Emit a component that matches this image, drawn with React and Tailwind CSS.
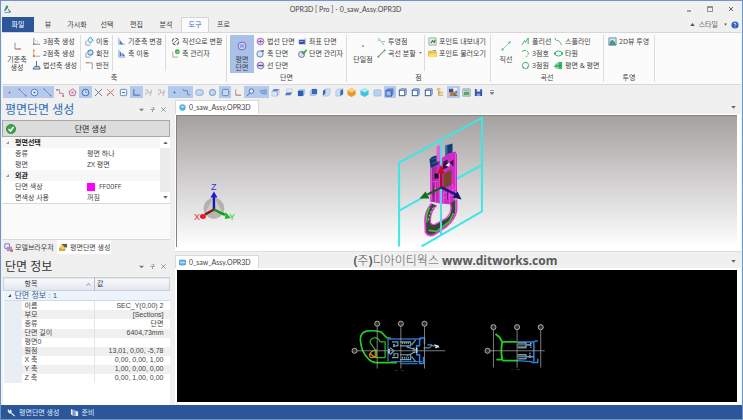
import React from "react";

const BLUE = "#4a72c0";
const GREEN = "#2fae5f";

const glyphs = {
  axis: <><path d="M3 1.500V8H9" fill="none" stroke="#8d93a0" /><path d="M3 8H9" stroke="#d98576" /></>,
  axisPoints: <><path d="M2 1V8H9" fill="none" stroke="#7d8798" /><path d="M4 4L7 6" stroke="#6aa9d8" strokeDasharray="1 1" /><circle cx="2" cy="8" r="1" fill="#d9654f" /></>,
  axisTwo: <><path d="M2 1V8H9" fill="none" stroke="#a9a0a0" /><circle cx="2" cy="8" r="1.200" fill="#e07a3e" /><circle cx="2" cy="1.500" r="1" fill="#e07a3e" /></>,
  axisNormal: <path d="M5 0V7M1 9L3 6H8L9 9Z" fill="#b9cde8" stroke="#486a9e" />,
  move: <><path d="M1 4V9H6" fill="none" stroke="#999" /><path d="M6 0L9 3.500L6 7L3 3.500Z" fill="#d9f1fb" stroke="#2c93c9" /></>,
  rotate: <><path d="M1 4V9H6" fill="none" stroke="#999" /><circle cx="6" cy="4" r="3" fill="#9fd2ee" stroke="#2579ae" /><path d="M4 5L8 3" stroke="#fff" /></>,
  flip: <><path d="M1 2H8V9" fill="none" stroke="#9a8a88" /><path d="M1 2H4" stroke="#e0806a" /></>,
  axisChange: <><path d="M2 1V8H9" fill="none" stroke="#7fa8dc" /><path d="M3 8V3L7 8Z" fill="#4f80c4" /></>,
  axisMove: <><path d="M2 1V9H9" fill="none" stroke="#7fa8dc" /><path d="M3 8V2L5 5V8M6 8V4L9 8Z" fill="#3e6fb6" /></>,
  convert: <><circle cx="5" cy="5" r="3.600" fill="none" stroke="#5e6470" strokeWidth="1.300" strokeDasharray="4 1.500" /><path d="M3.500 6.500L6.500 3.500" stroke="#555" /></>,
  axisManager: <><path d="M2 3V9H8" fill="none" stroke="#bb9a90" /><circle cx="7" cy="3" r="2.700" fill="#37b34a" /><path d="M5.800 3L6.800 4L8.300 2" fill="none" stroke="#e5ffe8" strokeWidth=".8" /></>,
  plane: <><circle cx="5" cy="5" r="4" fill="#d3cdf4" stroke="#7668c4" /><path d="M3 3.500H7V6.500H3Z" fill="#8f9ce8" /></>,
  planeNormal: <><circle cx="5" cy="5" r="3.800" fill="#efc9e4" stroke="#9c6fc0" /><path d="M2 5H8M5 3V7" stroke="#7b65c0" /></>,
  planeAxis: <><circle cx="4.500" cy="5.500" r="3.500" fill="#dbeaf8" stroke="#5b78ac" /><path d="M5 2L9 1L8 4Z" fill="#44639e" /></>,
  planeLine: <><circle cx="5" cy="5" r="3.800" fill="#ead9f4" stroke="#7c6cae" /><path d="M2 5H8" stroke="#5945ad" strokeWidth="1.500" /></>,
  coord: <><path d="M1 3H8V8H1Z" fill="#3851a5" /><path d="M0 5H6M8 1V9" stroke="#9aaede" /></>,
  planeManager: <><circle cx="4" cy="6" r="3.400" fill="#e4dcf3" stroke="#7769a0" /><path d="M4.500 3L6 5L9.500 1" fill="none" stroke="#2bb046" strokeWidth="2" /></>,
  point: <circle cx="5" cy="5" r="1" fill="#65aa83" />,
  project: <path d="M1 1L8 9M1 5L3 3M6 5H9" fill="none" stroke="#76b494" strokeWidth="1" />,
  split: <><path d="M1 9L9 1" stroke="#7b9a86" strokeWidth="1.200" /><circle cx="1.500" cy="8.500" r="1" fill={GREEN} /><circle cx="8.500" cy="1.500" r="1" fill={GREEN} /></>,
  exporter: <><path d="M1 1H9V9H1Z" fill="#e8efe9" stroke="#9baaa2" /><path d="M3 7L5 4L7 6L8 3" fill="none" stroke="#278f48" strokeWidth="1.300" /></>,
  folder: <><path d="M0 2H4L5 3H10V9H0Z" fill="#eebb43" /><path d="M0 9L2 5H10L9 9Z" fill="#ffdb73" /><path d="M5 2H9" stroke="#3d8148" /></>,
  line: <><path d="M1 9L9 1" stroke="#8fcf9f" strokeWidth="1" /><circle cx="1.500" cy="8.500" r="1" fill={GREEN} /><circle cx="8.500" cy="1.500" r="1" fill={GREEN} /></>,
  polyline: <path d="M1 9L4 4L5 6L8 1V8" fill="none" stroke={GREEN} />,
  arc: <path d="M1 3C4 0 9 2 8 6L6 9" fill="none" stroke={GREEN} strokeDasharray="5 1" />,
  circle3: <><circle cx="5" cy="5" r="3.500" fill="none" stroke={GREEN} /><path d="M5 1V2M2 7L3 7M8 7L7 7" stroke={GREEN} strokeWidth="2" /></>,
  spline: <path d="M1 1C2 6 4 2 6 5S8 7 8 9" fill="none" stroke={GREEN} />,
  ellipse: <><ellipse cx="5" cy="5" rx="4" ry="2.800" fill="none" stroke={GREEN} /><path d="M0 5H2M8 5H10" stroke={GREEN} strokeWidth="2" /></>,
  planes: <><path d="M1 4L5 1V8L2 9Z" fill="#73cf91" /><path d="M5 1H9V9H5Z" fill="#36b766" /><path d="M0 6L8 5" stroke="#1c8c46" /></>,
  view2d: <><path d="M1 1H9V9H1Z" fill="#d4e8f4" stroke="#6487a9" /><path d="M2 5L5 3L8 6V8H2Z" fill="#4b9a75" /><path d="M1 8.500H9" stroke="#2f7d8b" /></>,
  redDot: <circle cx="5" cy="5" r="1" fill="#c3547c" />,
  blueDot: <circle cx="5" cy="5" r="1" fill="#335fae" />,
  seg: <><path d="M1 1L9 9" stroke="#7489b5" /><circle cx="1.500" cy="1.500" r=".9" fill="#b95b84" /><circle cx="8.500" cy="8.500" r=".9" fill="#b95b84" /></>,
  ring: <><circle cx="5" cy="5" r="3.700" fill="#e5efff" stroke={BLUE} /><path d="M4 4H6V6H4Z" fill="#4165a7" /></>,
  ringArrow: <><circle cx="5" cy="5" r="3.700" fill="#c5daf8" stroke="#4a6cac" strokeWidth="1.100" /><path d="M5 2V5H7" fill="none" stroke="#7f9ac8" /></>,
  steps: <path d="M1 1L2 3H6V7L9 8" fill="none" stroke="#687fa8" />,
  redSteps: <><path d="M1 2H4V6H8V9" fill="none" stroke="#9d8298" /><path d="M0 2H2M7 9H9" stroke="#d84d63" strokeWidth="1.500" /></>,
  hexRed: <><path d="M5 1L9 4L7.500 8.500H2.500L1 4Z" fill="#ead7e6" stroke="#a96d91" /><path d="M4 5H6" stroke="#cc3e57" /></>,
  cross: <path d="M1 1L9 9M9 1L1 9" stroke="#667085" />,
  crossRed: <><path d="M1 1L9 9M9 1L1 9" stroke="#a08c98" /><path d="M1 8L5 5L9 9" fill="none" stroke="#e05a5a" /></>,
  frame: <><rect x="1.500" y="1.500" width="7" height="7" rx="1" fill="#e9f2ff" stroke="#5b7db9" /><path d="M3.500 5H6.500" stroke="#365998" /></>,
  frameSoft: <rect x="1.500" y="1.500" width="7" height="7" rx="1.500" fill="#c3d9f8" stroke="#5b7db9" />,
  cornerBlue: <path d="M2 1V8H9" fill="none" stroke="#5d7eb1" strokeWidth="1.300" />,
  gray: <path d="M1 2H4V5H7V9M2 8V5M8 2V6" fill="none" stroke="#c4c4c4" strokeWidth="1.500" />,
  box: <rect x="1" y="2" width="8" height="6" rx="2" fill="#c8dcf6" stroke="#7f9dcb" />,
  circ: <circle cx="5" cy="5" r="3.500" fill="#bdd5f3" stroke="#7591bf" />,
  search: <><circle cx="6" cy="3.500" r="2.500" fill="#dceaff" stroke="#48689f" /><path d="M4 5.500L1 9" stroke="#48689f" /></>,
  flag: <path d="M1 3L8 2V7L3 6Z" fill="#86aee2" stroke="#5f82b6" strokeWidth=".6" />,
  cubeTop: <><path d="M1 4L3 1H9L7 4Z" fill="#5d87cb" /><path d="M1 4H7V9H1ZM7 4L9 1V6L7 9Z" fill="#dce9fb" stroke="#8aa6d2" strokeWidth=".6" /></>,
  cubeBottom: <><path d="M3 1H9V6H3Z" fill="#e3eefc" stroke="#a9c0e2" strokeWidth=".6" /><path d="M1 8L3 5H9L7 8Z" fill="#4a78c3" /></>,
  cubeFront: <><path d="M1 4L3 1H9V6L7 9Z" fill="#adc7ee" /><rect x="1" y="3" width="6" height="6" fill="#2c5db4" /></>,
  cubeBack: <><rect x="3" y="1" width="6" height="6" fill="#3968b9" /><path d="M1 3V9H7L9 7H3V1Z" fill="#a9c4ec" /></>,
  cubeLeft: <><path d="M1 3L4 1V6L1 9Z" fill="#3766b8" /><path d="M4 1H9V6L7 9H1L4 6Z" fill="#cbdcf5" stroke="#89a6d5" strokeWidth=".5" /></>,
  cubeRight: <><path d="M1 3L3 1H9L6 3V9H1Z" fill="#cbdcf5" stroke="#89a6d5" strokeWidth=".5" /><path d="M6 3L9 1V7L6 9Z" fill="#3766b8" /></>,
  cubeOrange: <><path d="M5 0L9.500 2.500V7.500L5 10L.5 7.500V2.500Z" fill="#e79a28" /><path d="M5 0L9.500 2.500L5 5L.5 2.500Z" fill="#ffd27a" /></>,
  cubeCyan: <><path d="M5 0L9.500 2.500V7.500L5 10L.5 7.500V2.500Z" fill="#42c4dc" /><path d="M5 0L9.500 2.500L5 5L.5 2.500Z" fill="#a8eef6" /></>,
  slab: <rect x="1" y="2" width="8" height="7" rx="1" fill="#b9d1f1" stroke="#8ba9d6" strokeWidth=".6" />,
  cubeShade: <><rect x="1" y="3" width="6" height="6" fill="#9dbcf0" stroke="#2f55a0" /><path d="M1 3L3 1H9V7L7 9V3Z" fill="#6e93d4" stroke="#2f55a0" strokeWidth=".6" /></>,
  cubeWire: <><rect x="1.500" y="2.500" width="6" height="6" fill="#fff" stroke="#4469b4" strokeWidth="1.200" /><path d="M1.500 2.500L3 1H9V7L7.500 8.500" fill="none" stroke="#4469b4" /></>,
  tree: <><path d="M3 1V8H6M3 5H6" fill="none" stroke="#a48b52" /><path d="M1 0H5V3H1ZM5 4H8V6H5ZM5 7H8V9H5Z" fill="#e6c372" /></>,
  palette: <><path d="M0 1H5V5H0Z" fill="#514887" /><path d="M5 0H9V4H5Z" fill="#f1eef8" /><path d="M1 5H5V9H1Z" fill="#e06b36" /><path d="M5 4L10 9H5Z" fill="#438948" /><path d="M7 3H9V6H7Z" fill="#af539f" /></>,
  sheet: <><path d="M1 1H9V9H1Z" fill="#f3f8f4" stroke="#8894a6" /><path d="M2 4H8V8H2Z" fill="#54a866" /><path d="M2 2.500H8" stroke="#6c8fc3" /></>,
  save: <><path d="M1 1H8L9 2V9H1Z" fill="#3450a5" /><path d="M3 1H7V4H3Z" fill="#e3e9fa" /><path d="M3 6H7V9H3Z" fill="#8c9fd5" /></>,
  tick: <><circle cx="5" cy="5" r="4.600" fill="#3aa546" stroke="#247630" strokeWidth=".7" /><path d="M2.500 5L4.500 7L7.500 3" fill="none" stroke="#fff" strokeWidth="1.600" /></>,
  browser: <><path d="M1 1H6V6H1Z" fill="#fff" stroke="#77629d" /><path d="M3 4H9V9H3Z" fill="#ad91d2" /><path d="M7 7H10V10H7Z" fill="#d87545" /></>,
  props: <><path d="M0 5H7V9H0Z" fill="#d9ac38" /><path d="M3 1H9V5H3Z" fill="#5d6150" /><path d="M1 3L4 2L7 6L3 7Z" fill="#f2ce6a" /></>,
  wrench: <path d="M1 1L3 3L4 1.500A3 3 0 0 1 5 5L9 8.500L8 9.500L4.500 6A3 3 0 0 1 1 2Z" fill="#e7eefb" />,
  book: <path d="M1 1L3 2V9L1 7ZM4 2H5V9H4ZM6 3L9 4V9H6Z" fill="#e7eefb" />,
  globe: <><circle cx="5" cy="5" r="4.500" fill="#4fb0de" /><path d="M2 4L5 2L8 4L5 6Z" fill="#a9e0f6" /></>,
  doc: <><rect x=".5" y="1.500" width="9" height="7" rx="1" fill="#6fbbe5" stroke="#3f92c8" /><path d="M2 5H8" stroke="#e6f6ff" /></>,
  help: <><circle cx="5" cy="5" r="4.500" fill="#2d63c0" /><path d="M3.500 3.800C4 2.300 6.600 2.600 6 4.300L5 5.500M5 7V8" fill="none" stroke="#fff" strokeWidth="1.200" /></>,
};

function Icon({ name, className = "size-[9px]" }) {
  return (
    <svg viewBox="0 0 10 10" aria-hidden="true" className={`shrink-0 ${className}`}>
      {glyphs[name]}
    </svg>
  );
}

function Caret({ className = "" }) {
  return (
    <svg viewBox="0 0 6 4" aria-hidden="true" className={`h-[3px] w-[5px] shrink-0 ${className}`}>
      <path d="M0 0H6L3 3.500Z" fill="#666" />
    </svg>
  );
}

function ToolColumn({ items, className }) {
  return (
    <div className={`flex shrink-0 flex-col ${className}`}>
      {items.map(([icon, label, menu]) => (
        <button key={label} className="flex h-[12px] items-center gap-[2px] whitespace-nowrap">
          <Icon name={icon} />
          <span>{label}</span>
          {menu && <svg viewBox="0 0 4 3" className="ml-px h-[2px] w-[3px]"><path d="M0 0H4L2 2.500Z" fill="#666" /></svg>}
        </button>
      ))}
    </div>
  );
}

function BigTool({ icon, lines, className = "" }) {
  return (
    <button className={`flex h-[38px] shrink-0 flex-col items-center pt-[6px] ${className}`}>
      <Icon name={icon} className="mb-[5px] size-[10px]" />
      {lines.map((l) => <span key={l} className="leading-[8px]">{l}</span>)}
    </button>
  );
}

function Group({ label, className, children }) {
  return (
    <section aria-label={label} className={`my-[2px] flex shrink-0 flex-col border-r border-[#dcdcdc] ${className}`}>
      <div className="flex h-[38px]">{children}</div>
      <div className="text-center leading-[9px]">{label}</div>
    </section>
  );
}

const Rule = () => <div className="h-[36px] w-px shrink-0 bg-[#dcdcdc]" />;

const tabs = [
  ["파일", "w-[32px] bg-[#2b579a] text-white"],
  ["뷰", "w-[28px]"],
  ["가시화", "w-[30px]"],
  ["선택", "w-[30px]"],
  ["편집", "w-[29px]"],
  ["분석", "w-[30px]"],
  ["도구", "w-[28px] border border-b-0 border-[#d5d5d5] bg-[#fbfbfb] pb-px text-[#2b6cb8]"],
  ["프로", "w-[29px]"],
];

const quick = [
  ["redDot", 1], ["seg", 1], ["ring", 1], ["seg", 1], ["redSteps"], ["hexRed"], ["ringArrow", 1], ["cross"], ["crossRed"], ["frame"],
  ["cornerBlue", 1], ["gray"], ["gray"], ["blueDot", 1], ["steps", 1], ["box"], ["circ"], ["frameSoft", 1], ["axis"], ["search", 1],
  ["flag", 1], ["cubeTop"], ["cubeBottom"], ["cubeFront"], ["cubeBack"], ["cubeLeft"], ["cubeRight"], ["cubeOrange"], ["cubeCyan"], ["slab"],
  ["cubeShade", 1], ["cubeWire"], ["cubeWire"], ["cubeWire"], ["tree"], ["palette", 1], ["sheet"], ["save"],
];

function Ribbon() {
  return (
    <div className="mx-px flex h-[53px] shrink-0 overflow-hidden border-y border-[#d8d8d8] bg-[#fbfbfb]">
      <Group label="축" className="w-[225px]">
        <BigTool icon="axis" lines={["기준축", "생성"]} className="w-[30px]" />
        <ToolColumn className="w-[48px]" items={[["axisPoints", "3점축 생성"], ["axisTwo", "2점축 생성"], ["axisNormal", "법선축 생성"]]} />
        <Rule />
        <ToolColumn className="w-[31px] pl-[4px]" items={[["move", "이동"], ["rotate", "회전"], ["flip", "반전"]]} />
        <Rule />
        <ToolColumn className="w-[52px] pl-[4px]" items={[["axisChange", "기준축 변경"], ["axisMove", "축 이동"]]} />
        <Rule />
        <ToolColumn className="pl-[5px]" items={[["convert", "직선으로 변환"], ["axisManager", "축 관리자"]]} />
      </Group>
      <Group label="단면" className="w-[120px]">
        <BigTool icon="plane" lines={["평면", "단면"]} className="ml-[3px] w-[24px] bg-[#a9c1e6]" />
        <ToolColumn className="w-[42px] pl-[2px]" items={[["planeNormal", "법선 단면"], ["planeAxis", "축 단면"], ["planeLine", "선 단면"]]} />
        <ToolColumn className="pl-[2px]" items={[["coord", "좌표 단면"], ["planeManager", "단면 관리자"]]} />
      </Group>
      <Group label="점" className="w-[144px]">
        <BigTool icon="point" lines={["단일점"]} className="ml-[3px] w-[26px]" />
        <ToolColumn className="w-[48px] pl-px" items={[["project", "투영점"], ["split", "곡선 분할", true]]} />
        <Rule />
        <ToolColumn className="pl-[3px]" items={[["exporter", "포인트 내보내기"], ["folder", "포인트 불러오기"]]} />
      </Group>
      <Group label="곡선" className="w-[113px]">
        <BigTool icon="line" lines={["직선"]} className="w-[30px]" />
        <ToolColumn className="w-[33px]" items={[["polyline", "폴리선"], ["arc", "3점호"], ["circle3", "3점원"]]} />
        <ToolColumn className="" items={[["spline", "스플라인"], ["ellipse", "타원"], ["planes", "평면 & 평면"]]} />
      </Group>
      <Group label="투영" className="w-[51px]">
        <ToolColumn className="pl-[4px]" items={[["view2d", "2D뷰 투영"]]} />
      </Group>
    </div>
  );
}

function PanelTitle({ children, className }) {
  return (
    <div className="flex h-[21px] shrink-0 items-center justify-between pr-[4px] pl-[3px]">
      <h2 className={`text-[12px] leading-[16px] ${className}`}>{children}</h2>
      <div className="flex items-center gap-[6px]">
        <button aria-label="메뉴"><svg viewBox="0 0 6 6" className="size-[5px]"><path d="M0 2H6L3 5Z" fill="#777" /></svg></button>
        <button aria-label="고정"><svg viewBox="0 0 6 6" className="size-[5px]"><path d="M1.500 0H4.500V3H5.500M.5 3H4.500M3 3V6" fill="none" stroke="#777" strokeWidth=".8" /></svg></button>
        <button aria-label="닫기"><svg viewBox="0 0 6 6" className="size-[5px]"><path d="M.5 .5L5.500 5.500M5.500 .5L.5 5.500" stroke="#777" strokeWidth=".9" /></svg></button>
      </div>
    </div>
  );
}

const options = [
  ["평면선택"],
  ["종류", "평면 하나"],
  ["평면", "ZX 평면"],
  ["외관"],
  ["단면 색상", "FF00FF", true],
  ["면색상 사용", "꺼짐"],
];

const info = [
  ["이름", "SEC_Y(0,00) 2"],
  ["부모", "[Sections]"],
  ["종류", "단면"],
  ["단면 길이", "6404,73mm"],
  ["평면0", ""],
  ["원점", "13,01, 0,00, -5,78"],
  ["X 축", "0,00, 0,00, 1,00"],
  ["Y 축", "1,00, 0,00, 0,00"],
  ["Z 축", "0,00, 1,00, 0,00"],
];

function SidePanel() {
  return (
    <aside className="flex w-[168px] shrink-0 flex-col">
      <PanelTitle className="text-[#2a6cb4]">평면단면 생성</PanelTitle>
      <button className="flex h-[17px] shrink-0 items-center border border-[#a9a9a9] bg-[#dcdcdc] px-[3px] text-[8px] text-[#222]">
        <Icon name="tick" className="size-[10px]" />
        <span className="flex-1 pr-[1px] text-center">단면 생성</span>
      </button>
      <div className="flex shrink-0 bg-white">
        <table className="flex-1 table-fixed border-collapse">
          <tbody>
            {options.map(([k, v, swatch]) =>
              v === undefined ? (
                <tr key={k} className="h-[11px] bg-[#f7f7f7]">
                  <th colSpan={2} scope="rowgroup" className="p-0 text-left leading-[11px] font-bold text-[#222]">
                    <span className="flex items-center"><svg viewBox="0 0 4 4" className="mr-[6px] ml-[4px] size-[3px]"><path d="M4 0V4H0Z" fill="#999" /></svg>{k}</span>
                  </th>
                </tr>
              ) : (
                <tr key={k} className="h-[11px]">
                  <th scope="row" className="w-[85px] p-0 pl-[13px] text-left leading-[11px] font-normal">{k}</th>
                  <td className="p-0 leading-[11px]">
                    <span className="flex items-center gap-[4px]">{swatch && <span className="size-[8px] bg-[#ff00ff]" />}{v}</span>
                  </td>
                </tr>
              )
            )}
          </tbody>
        </table>
        <div className="flex w-[10px] flex-col items-center justify-between bg-[#ececec]">
          <button aria-label="위로" className="grid h-[11px] w-full place-items-center bg-white"><Caret className="rotate-180" /></button>
          <button aria-label="아래로" className="grid h-[11px] w-full place-items-center bg-white"><Caret /></button>
        </div>
      </div>
      <div className="h-[36px] shrink-0 border-t border-[#d9d9d9] bg-[#fafafa]" />
      <div className="flex h-[17px] shrink-0 border-t border-[#d9d9d9]">
        <button className="flex h-[14px] w-[55px] items-center gap-[2px] pl-[2px] whitespace-nowrap"><Icon name="browser" />모델브라우저</button>
        <button className="flex h-[14px] w-[54px] items-center gap-[2px] bg-white pl-[2px] whitespace-nowrap"><Icon name="props" />평면단면 생성</button>
      </div>
      <PanelTitle className="text-[#333]">단면 정보</PanelTitle>
      <div className="ml-px flex-1 bg-white font-['Liberation_Sans','Noto_Sans_CJK_KR',sans-serif] text-[#444]">
        <table className="h-[106px] w-full table-fixed border-collapse leading-[8px]">
          <colgroup>
            <col className="w-[18px]" />
            <col className="w-[73px]" />
            <col />
          </colgroup>
          <thead>
            <tr className="h-[13px] border border-[#ccd2dc] bg-linear-to-b from-[#f8f9fb] to-[#e2e6ed]">
              <th className="p-0" />
              <th scope="col" className="p-0 pl-[3px] font-normal">
                <span className="flex items-center justify-between pr-[3px]">항목
                  <svg viewBox="0 0 6 4" className="h-[3px] w-[5px]"><path d="M.5 3.500L3 .5L5.500 3.500" fill="none" stroke="#777" /></svg>
                </span>
              </th>
              <th scope="col" className="border-l border-[#b7bfcd] p-0 pl-[2px] text-left font-normal">값</th>
            </tr>
          </thead>
          <tbody>
            <tr className="bg-[#edf3fa]">
              <th colSpan={3} scope="rowgroup" className="border-b border-[#cddbea] p-0 text-left text-[8px] font-normal text-[#315f96]">
                <span className="flex items-center"><svg viewBox="0 0 4 4" className="mr-[4px] ml-[4px] size-[3px]"><path d="M4 0V4H0Z" fill="#445" /></svg>단면 정보 : 1</span>
              </th>
            </tr>
            {info.map(([k, v]) => (
              <tr key={k} className="even:bg-white odd:bg-[#f0f0f0]">
                <td className="bg-[#e9edf4] p-0" />
                <th scope="row" className="p-0 pl-[3px] text-left font-normal">{k}</th>
                <td className="border-l border-[#e4e4e4] p-0 pr-[6px] text-right whitespace-nowrap">{v}</td>
              </tr>
            ))}
          </tbody>
        </table>
      </div>
    </aside>
  );
}

function Model() {
  return (
    <svg viewBox="176 115 561 130" role="img" aria-label="3D 모델" className="absolute inset-0 h-full w-full">
      <circle cx="213" cy="207" r="10.500" fill="#8d8989" opacity=".55" />
      <path d="M213 195L222 212L213 208L204 212Z" fill="#d8d6d6" opacity=".7" />
      <path d="M213 208V195" stroke="#1818a8" strokeWidth="2.400" />
      <path d="M209.500 196L213 190L216.500 196Z" fill="#1a1ae0" />
      <path d="M213 208L204 213" stroke="#8b1414" strokeWidth="2.400" />
      <ellipse cx="202" cy="215" rx="3" ry="2.500" fill="#e81c1c" />
      <path d="M213 208L224 213.500" stroke="#119411" strokeWidth="2.400" />
      <path d="M224.500 210.500L230 216.500L224 217.500Z" fill="#17bd2b" />
      <g fontFamily="'Liberation Sans', sans-serif" fontSize="9">
        <text x="210" y="188.500" fill="#3434d8">Z</text>
        <text x="193" y="219" fill="#e03030">X</text>
        <text x="228" y="219" fill="#36c63e">Y</text>
      </g>
      <g fill="none" stroke="#3ee6e6" strokeWidth="2">
        <path d="M398.500 245V161L482 116" />
        <path d="M481.500 115V210L421 245" />
        <path d="M399 209L482 163" />
      </g>
      <path d="M445 144L452 142V158H445Z" fill="#173c74" />
      <path d="M445 144L447 143V157H445Z" fill="#2e6ea7" />
      <path d="M429 158Q432 153 440 154L442 167H430Z" fill="#153766" />
      <path d="M431 158L437 156M431 162L438 160" stroke="#2a66a0" />
      <path d="M436 145L440 143L441 146V160H436Z" fill="#e85fdc" />
      <path d="M442 156L448 152L455 150L456.500 153V193L452 203L440 202L430 200V167L437 163Z" fill="#cf2cc6" />
      <path d="M430 167L436 165V200L430 200Z" fill="#a52a9e" />
      <path d="M443 160L447 158V166L442 168ZM449 161L453 158V165Z" fill="#27153b" />
      <path d="M445 164L449 161V165Z" fill="#fff" />
      <path d="M443 172L451 168V183L443 187Z" fill="#76462c" />
      <path d="M434 172H438V177H434Z" fill="#151228" />
      <path d="M431 166V199M435 181V201M455 152V193M439 167V201M449 186V201M452 182L453 198M443 190V202M432 180H437M432 187H439M444 192L455 187M442 197L455 192" stroke="#f048e6" strokeWidth="1" fill="none" />
      <path d="M433 185V195M447 189V198" stroke="#5a2a5c" strokeWidth="1" />
      <path d="M431 202Q424 211 424.500 219L425 231Q428 236 434 233L446 225Q454 217 455 209V198L450 202Q453 212 446 217L435 223Q429 224 430 218Q430 210 436 204Z" fill="#37453a" />
      <path d="M431 202Q424 211 424.500 219L425 231Q428 236 434 233L446 225Q455 217 456 209V198" fill="none" stroke="#e03ad5" strokeWidth="1.800" />
      <path d="M436 204Q430 210 430 218Q429 224 434 223L445 217Q452 212 450 202" fill="none" stroke="#e04ad6" strokeWidth="1.200" />
      <path d="M429 206Q425 213 426.500 221M428 229L436 230L449 220L453 212" fill="none" stroke="#3fc22c" strokeWidth="1.600" />
      <path d="M433 206Q428 212 428 221" fill="none" stroke="#dbffe0" strokeWidth=".8" strokeDasharray="2 2" />
      <path d="M440.500 138V234" stroke="#53dbe5" strokeWidth="2" />
      <path d="M440.500 187V169" stroke="#a80f24" strokeWidth="2.500" />
      <path d="M437 172L440.500 163L444 172Z" fill="#c11020" />
      <path d="M441 186L427 193" stroke="#145c1a" strokeWidth="2" />
      <path d="M419 197L425 190L429 197Z" fill="#176d1b" />
      <path d="M441 186L455 193" stroke="#151b72" strokeWidth="2.500" />
      <path d="M461 198L452 196L457 190Z" fill="#131763" />
    </svg>
  );
}

const balloons = [[376, 322.5], [400, 322.5], [424, 322.5], [353, 350], [494, 326], [518, 326], [542, 326], [488, 350]];

function Drawing() {
  return (
    <svg viewBox="177 268 560 134" role="img" aria-label="단면 도면" className="absolute inset-0 h-full w-full">
      <g fill="none" strokeLinejoin="round">
        <path d="M390 337H386L380 331Q374 329 365 330Q358 332 359 340Q360 351 366 357Q370 362 376 362H396" stroke="#25cf22" strokeWidth="1.700" />
        <path d="M384 341H379Q377 336 373 337Q368 338 369 342L374 349V357H384Z" stroke="#1fba20" strokeWidth="1.300" />
        <path d="M368 354Q370 350 375 349V356L370 357Q367 356 369 353L374 357" stroke="#e58b22" strokeWidth="1.200" />
        <path d="M387 338V361M387 338H421M390 361H422M400 363L417 363" stroke="#2e6db5" strokeWidth="1.400" />
        <path d="M419 337V345H416V354H419V363H423V356M419 337H424V343" stroke="#2b84e4" strokeWidth="1.500" />
        <path d="M391 341H397V345H392M391 357H397V353H392M399 345H410V341H399M399 354H410V359H399M411 344L415 339M411 356L415 361M389 347L393 350L389 354M406 346L415 349M406 355L415 351" stroke="#6fa0c9" strokeWidth="1.200" />
        <path d="M401 342H409M401 357H409M393 343V347M393 354V358M413 347V353" stroke="#9fb497" strokeWidth="2" strokeDasharray="1 1" />
        <path d="M423 347H429L431 345H437L439 347M427 344H432" stroke="#5d8dac" strokeWidth="1.200" />
        <path d="M388 348V353M416 347V352M434 344L438 345.500L435 347" stroke="#d7e4fb" strokeWidth="1.500" />
        <path d="M496 333L500 336L503 341H517M503 341Q501 350 503 359H497M503 360H519" stroke="#20d021" strokeWidth="1.900" />
        <path d="M517 341H535L537 340H539M518 360L532 361L534 362H539V358M535 341V361" stroke="#2f83dc" strokeWidth="1.500" />
        <path d="M519 342H527V347H519M519 354H527V358H519M528 344H532M528 356H535" stroke="#6b90b0" strokeWidth="1.600" />
        <path d="M518 344H527M518 346H527M518 354H527M518 356H527" stroke="#7d9d93" strokeWidth="1" />
        <path d="M532 342V347M531 352V357" stroke="#9ec7f0" strokeDasharray="1 1" strokeWidth="1.500" />
      </g>
      <g stroke="#a0a0a0" strokeWidth=".8" fill="none">
        <path d="M376 325V368M400 325V368M424 325V368M355 350H445M494 329V367M518 329V367M542 329V367M490 350H546" />
        {balloons.map(([x, y]) => <circle key={`${x}-${y}`} cx={x} cy={y} r="2.600" stroke="#ccc" fill="#333" />)}
      </g>
      <path d="M394 370H397M400 370H403M512 369H514M517 369H521" stroke="#3b3b3b" strokeWidth=".8" />
    </svg>
  );
}

function DocTab({ icon }) {
  return (
    <button className="flex w-[84px] items-center gap-[3px] border border-b-0 border-[#d9d9d9] bg-white pr-[4px] pl-[3px] whitespace-nowrap">
      <Icon name={icon} className="size-[7px]" />
      0_saw_Assy.OPR3D
      <svg viewBox="0 0 6 6" aria-hidden="true" className="ml-auto size-[5px]"><path d="M.5 .5L5.500 5.500M5.500 .5L.5 5.500" stroke="#666" strokeWidth=".9" /></svg>
    </button>
  );
}

export default function App() {
  return (
    <div className="flex h-screen min-h-[420px] flex-col border border-[#6f96c4] bg-[#f0f0f0] font-['Open_Sans','Noto_Sans_CJK_KR',sans-serif] text-[7px] leading-[9px] text-[#3f3f3f]">
      <header className="relative flex h-[16px] shrink-0 items-center justify-between pl-[2px]">
        <svg viewBox="0 0 10 10" aria-hidden="true" className="size-[9px]">
          <path d="M4 0L6 2L3 6L1 7Z" fill="#1d8a8f" /><path d="M5 3L9 8H7Z" fill="#52616b" /><path d="M1 8H7L9 9H2Z" fill="#2fa88f" />
        </svg>
        <h1 className="pointer-events-none absolute inset-x-0 pr-[52px] text-center font-['Lato','Noto_Sans_CJK_KR',sans-serif] text-[#444]">OPR3D [ Pro ] - 0_saw_Assy.OPR3D</h1>
        <div className="flex items-center gap-[15px] pr-[8px]">
          <button aria-label="최소화"><svg viewBox="0 0 6 6" className="size-[6px]"><path d="M1 5H5" stroke="#555" /></svg></button>
          <button aria-label="최대화"><svg viewBox="0 0 6 6" className="size-[6px]"><path d="M.5 .5H5.500V5.500H.5ZM.5 1.500H5.500" fill="none" stroke="#777" strokeWidth=".8" /></svg></button>
          <button aria-label="닫기"><svg viewBox="0 0 6 6" className="size-[6px]"><path d="M1 1L5 5M5 1L1 5" stroke="#555" strokeWidth=".9" /></svg></button>
        </div>
      </header>
      <nav className="flex h-[15px] shrink-0 pl-px">
        {tabs.map(([label, cls]) => (
          <button key={label} className={`shrink-0 text-center ${cls}`}>{label}</button>
        ))}
        <div className="ml-auto flex items-center gap-[4px] pr-[3px] text-[#666]">
          <svg viewBox="0 0 6 4" aria-hidden="true" className="h-[3px] w-[5px]"><path d="M0 4H6L3 0Z" fill="#555" /></svg>
          <button className="flex items-center gap-[6px]">스타일<svg viewBox="0 0 4 3" className="h-[3px] w-[3px]"><path d="M0 0H4L2 3Z" fill="#666" /></svg></button>
          <button aria-label="도움말"><Icon name="help" className="size-[8px]" /></button>
        </div>
      </nav>
      <Ribbon />
      <div role="toolbar" className="flex h-[14px] shrink-0 items-center pl-[2px]">
        <div className="flex w-[482px] shrink-0">
          {quick.map(([icon, on], i) => (
            <button key={i} aria-label={`${icon} ${i + 1}`} className={`flex h-[12px] flex-1 items-center justify-center ${on ? "bg-[#b3caec]" : ""}`}>
              <Icon name={icon} />
            </button>
          ))}
        </div>
        <svg viewBox="0 0 4 5" aria-hidden="true" className="ml-[5px] h-[5px] w-[4px]"><path d="M0 .5H4M0 2.500H4L2 4.500Z" stroke="#777" strokeWidth=".7" fill="#777" /></svg>
      </div>
      <main className="flex min-h-0 flex-1 gap-[5px] px-px">
        <SidePanel />
        <div className="flex min-w-0 flex-1 flex-col font-['Lato','Noto_Sans_CJK_KR',sans-serif]">
          <div className="flex h-[15px] shrink-0 justify-between pt-px">
            <DocTab icon="globe" />
            <button aria-label="탭 목록" className="pr-[5px]"><Caret /></button>
          </div>
          <div className="flex min-h-0 flex-1 bg-white pt-px pr-[4px] pb-[4px] pl-px">
            <div className="relative flex-1 border-t border-l border-[#858282] bg-linear-to-b from-[#a5a1a1] via-[#d2d0d0] to-white">
              <Model />
            </div>
          </div>
          <div className="relative flex h-[17px] shrink-0 justify-between border-t border-[#dedede] pt-[3px]">
            <DocTab icon="doc" />
            <p className="pointer-events-none absolute inset-x-0 top-0 pr-[5px] text-center font-['Noto_Sans','Noto_Sans_CJK_KR',sans-serif] text-[12px] leading-[17px] font-bold text-[#5a5a5a]">
              (<span className="font-light">주</span>)<span className="font-light">디아이티웍스</span> www.ditworks.com
            </p>
            <button aria-label="탭 목록" className="pr-[5px]"><Caret /></button>
          </div>
          <div className="flex min-h-0 flex-1 bg-white pt-[2px] pr-[4px] pb-[3px] pl-[2px]">
            <div className="relative flex-1 bg-black">
              <Drawing />
            </div>
          </div>
        </div>
      </main>
      <footer className="flex h-[14px] shrink-0 items-center gap-[11px] bg-[#2b579a] pl-[6px] text-[#dfe9fa]">
        <span className="flex items-center gap-[3px]"><Icon name="wrench" />평면단면 생성</span>
        <span className="flex items-center gap-[2px]"><Icon name="book" />준비</span>
      </footer>
    </div>
  );
}
